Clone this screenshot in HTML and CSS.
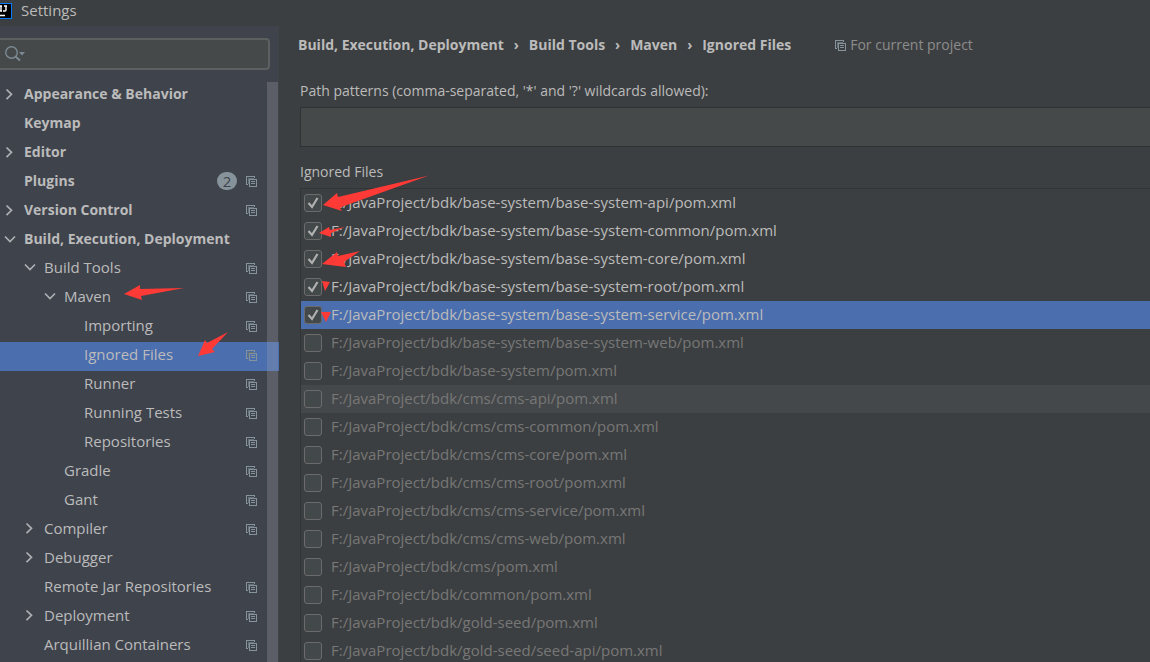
FILE: index.html
```html
<!DOCTYPE html>
<html lang="en">
<head>
<meta charset="utf-8">
<title>Settings</title>
<link rel="stylesheet" href="styles.css">
</head>
<body>
<svg class="symbols" aria-hidden="true">
  <symbol id="copy" viewBox="0 0 11 11">
    <path d="M0 0h9v2h-1v-1h-7v7h1v1h-2z" fill="#87939a"/>
    <path d="M2 2h6v1h-5v5h-1z" fill="#65717a"/>
    <path d="M3 3h8v8h-8zM4 4v6h6v-6z" fill="#87939a" fill-rule="evenodd"/>
    <path d="M5 5h4v1h-4zM5 7h4v1h-4z" fill="#87939a"/>
  </symbol>
  <symbol id="right" viewBox="0 0 12 12"><path d="M2.500 1.500L7.500 6.300l-5 4.800" fill="none" stroke="#adb0b2" stroke-width="1.700"/></symbol>
  <symbol id="down" viewBox="0 0 12 12"><path d="M1 3.500L6 8.500l5-5" fill="none" stroke="#adb0b2" stroke-width="1.700"/></symbol>
</svg>
<div class="window">
  <header class="titlebar">
    <svg class="logo" viewBox="0 0 12 16" aria-hidden="true"><path d="M0 0h12v16H0z" fill="#087cfa"/><path d="M0 1h11v14H0z" fill="#000"/><path d="M0 3h2M1 3v5M0 8h2M4 3h3M6 3v4q0 1-1 1H3M0 12.500h5" fill="none" stroke="#fff" stroke-width="1.400"/></svg>
    <span>Settings</span>
  </header>
  <div class="columns">
    <aside class="sidebar">
      <label class="search">
        <svg viewBox="0 0 22 18" aria-hidden="true"><circle cx="7.500" cy="7.500" r="5.800" fill="none" stroke="#7b8a94" stroke-width="1.400"/><path d="M11.500 11.500l4.500 4" stroke="#7b8a94" stroke-width="2"/><path d="M15 7h6l-3 3.500z" fill="#7b8a94"/></svg>
        <input type="text" aria-label="Search settings">
      </label>
      <div class="tree-area">
        <ul class="tree">
          <li class="strong"><svg class="arrow"><use href="#right"/></svg><span>Appearance &amp; Behavior</span></li>
          <li class="strong"><i class="arrow"></i><span>Keymap</span></li>
          <li class="strong"><svg class="arrow"><use href="#right"/></svg><span>Editor</span></li>
          <li class="strong"><i class="arrow"></i><span>Plugins</span><b class="badge">2</b><svg class="copy"><use href="#copy"/></svg></li>
          <li class="strong"><svg class="arrow"><use href="#right"/></svg><span>Version Control</span><svg class="copy"><use href="#copy"/></svg></li>
          <li class="strong"><svg class="arrow"><use href="#down"/></svg><span>Build, Execution, Deployment</span></li>
          <li class="level1"><svg class="arrow"><use href="#down"/></svg><span>Build Tools</span><svg class="copy"><use href="#copy"/></svg></li>
          <li class="level2"><svg class="arrow"><use href="#down"/></svg><span>Maven</span><svg class="copy"><use href="#copy"/></svg></li>
          <li class="level3"><i class="arrow"></i><span>Importing</span><svg class="copy"><use href="#copy"/></svg></li>
          <li class="level3 selected"><i class="arrow"></i><span>Ignored Files</span><svg class="copy"><use href="#copy"/></svg></li>
          <li class="level3"><i class="arrow"></i><span>Runner</span><svg class="copy"><use href="#copy"/></svg></li>
          <li class="level3"><i class="arrow"></i><span>Running Tests</span><svg class="copy"><use href="#copy"/></svg></li>
          <li class="level3"><i class="arrow"></i><span>Repositories</span><svg class="copy"><use href="#copy"/></svg></li>
          <li class="level2"><i class="arrow"></i><span>Gradle</span><svg class="copy"><use href="#copy"/></svg></li>
          <li class="level2"><i class="arrow"></i><span>Gant</span><svg class="copy"><use href="#copy"/></svg></li>
          <li class="level1"><svg class="arrow"><use href="#right"/></svg><span>Compiler</span><svg class="copy"><use href="#copy"/></svg></li>
          <li class="level1"><svg class="arrow"><use href="#right"/></svg><span>Debugger</span></li>
          <li class="level1"><i class="arrow"></i><span>Remote Jar Repositories</span><svg class="copy"><use href="#copy"/></svg></li>
          <li class="level1"><svg class="arrow"><use href="#right"/></svg><span>Deployment</span><svg class="copy"><use href="#copy"/></svg></li>
          <li class="level1"><i class="arrow"></i><span>Arquillian Containers</span><svg class="copy"><use href="#copy"/></svg></li>
        </ul>
        <div class="scrollbar"></div>
      </div>
    </aside>
    <main class="content">
      <nav class="crumbs">
        <span>Build, Execution, Deployment</span><i>›</i><span>Build Tools</span><i>›</i><span>Maven</span><i>›</i><span>Ignored Files</span>
        <small><svg class="copy"><use href="#copy"/></svg>For current project</small>
      </nav>
      <label class="caption" for="patterns">Path patterns (comma-separated, '*' and '?' wildcards allowed):</label>
      <input class="patterns" id="patterns" type="text">
      <h2 class="caption">Ignored Files</h2>
      <div class="files">
        <label><input type="checkbox" checked><span>F:/JavaProject/bdk/base-system/base-system-api/pom.xml</span></label>
        <label><input type="checkbox" checked><span>F:/JavaProject/bdk/base-system/base-system-common/pom.xml</span></label>
        <label><input type="checkbox" checked><span>F:/JavaProject/bdk/base-system/base-system-core/pom.xml</span></label>
        <label><input type="checkbox" checked><span>F:/JavaProject/bdk/base-system/base-system-root/pom.xml</span></label>
        <label class="selected"><input type="checkbox" checked><span>F:/JavaProject/bdk/base-system/base-system-service/pom.xml</span></label>
        <label class="off"><input type="checkbox"><span>F:/JavaProject/bdk/base-system/base-system-web/pom.xml</span></label>
        <label class="off"><input type="checkbox"><span>F:/JavaProject/bdk/base-system/pom.xml</span></label>
        <label class="off hovered"><input type="checkbox"><span>F:/JavaProject/bdk/cms/cms-api/pom.xml</span></label>
        <label class="off"><input type="checkbox"><span>F:/JavaProject/bdk/cms/cms-common/pom.xml</span></label>
        <label class="off"><input type="checkbox"><span>F:/JavaProject/bdk/cms/cms-core/pom.xml</span></label>
        <label class="off"><input type="checkbox"><span>F:/JavaProject/bdk/cms/cms-root/pom.xml</span></label>
        <label class="off"><input type="checkbox"><span>F:/JavaProject/bdk/cms/cms-service/pom.xml</span></label>
        <label class="off"><input type="checkbox"><span>F:/JavaProject/bdk/cms/cms-web/pom.xml</span></label>
        <label class="off"><input type="checkbox"><span>F:/JavaProject/bdk/cms/pom.xml</span></label>
        <label class="off"><input type="checkbox"><span>F:/JavaProject/bdk/common/pom.xml</span></label>
        <label class="off"><input type="checkbox"><span>F:/JavaProject/bdk/gold-seed/pom.xml</span></label>
        <label class="off"><input type="checkbox"><span>F:/JavaProject/bdk/gold-seed/seed-api/pom.xml</span></label>
      </div>
    </main>
  </div>
  <svg class="marks" width="440" height="370" viewBox="0 0 440 370" aria-hidden="true">
    <g fill="#fe3a36">
      <path d="M323 205L337 193L338 197L429 175.500L344 206L340 208L342 211z"/>
      <path d="M319 233L329 227L330 230L345 227L331 233L331 237z"/>
      <path d="M322 264L337 252L338 256L360 251L344 262L346 267z"/>
      <path d="M322 281L330 282L325 291z"/>
      <path d="M321 312H331L326 322z"/>
      <path d="M124 294L140 285L140 289L184 288L141 296L142 300z"/>
      <path d="M198 356L205 340L207 343L228 332L212 349L215 352z"/>
    </g>
  </svg>
</div>
</body>
</html>
```
FILE: styles.css
```css
* { box-sizing: border-box; }
body {
  margin: 0;
  background: #3c3f41;
  color: #bbbbbb;
  font: 15px/20px "Open Sans", "Noto Sans", sans-serif;
}
.symbols { display: none; }
.window {
  position: relative;
  display: flex;
  flex-direction: column;
  height: 100vh;
  overflow: hidden;
}
.titlebar {
  display: flex;
  align-items: center;
  gap: 9px;
  height: 26px;
  flex: none;
  padding-bottom: 6px;
}
.logo { width: 12px; height: 16px; margin-top: 2px; }
.columns { display: flex; flex: 1; min-height: 0; }
.sidebar {
  display: flex;
  flex-direction: column;
  width: 279px;
  flex: none;
  background: #3f434c;
  padding-top: 12px;
}
.search {
  display: flex;
  align-items: center;
  height: 32px;
  flex: none;
  margin-right: 9px;
  padding-left: 4px;
  background: #45494a;
  border: 2px solid #5d6061;
  border-left: 0;
  border-radius: 0 4px 4px 0;
}
.search svg { width: 22px; height: 18px; flex: none; }
.search input {
  flex: 1;
  min-width: 0;
  background: none;
  border: 0;
  outline: 0;
  color: inherit;
  font: inherit;
}
.tree-area { position: relative; margin-top: 11px; flex: 1; min-height: 0; }
.tree { list-style: none; margin: 0; padding: 0; }
.tree li {
  display: flex;
  align-items: center;
  height: 29px;
  padding: 0 22px 5px 4px;
  white-space: nowrap;
}
.tree .arrow { width: 12px; height: 12px; flex: none; margin-right: 8px; }
.tree .level1 { padding-left: 24px; }
.tree .level2 { padding-left: 44px; }
.tree .level3 { padding-left: 64px; }
.tree span { flex: 1; }
.tree .strong { padding-bottom: 3px; font-weight: 700; font-size: 14px; }
.tree .copy { margin-top: 3px; }
.tree .strong .copy { margin-top: 1px; }
.copy { width: 11px; height: 11px; flex: none; }
.badge {
  width: 20px;
  height: 18px;
  margin-right: 9px;
  border-radius: 9px;
  background: #87939a;
  color: #3f434c;
  font-size: 15px;
  font-weight: 400;
  line-height: 18px;
  text-align: center;
}
.selected { background: #4b6eaf; }
.scrollbar {
  position: absolute;
  top: 1px;
  right: 1px;
  bottom: 0;
  width: 11px;
  background: rgba(166, 166, 176, 0.28);
}
.content {
  display: flex;
  flex-direction: column;
  flex: 1;
  min-width: 0;
  padding: 9px 0 0 21px;
}
.crumbs {
  display: flex;
  align-items: center;
  margin-left: -2px;
  font-size: 14px;
  font-weight: 700;
  white-space: nowrap;
}
.crumbs i { width: 25px; text-align: center; font-style: normal; }
.crumbs small {
  display: flex;
  align-items: center;
  gap: 4px;
  margin-left: 44px;
  color: #8c8c8c;
  font-size: 14px;
  font-weight: 400;
}
.caption { margin: 25px 0 0; font-size: 14px; font-weight: 400; white-space: nowrap; }
.patterns {
  height: 40px;
  flex: none;
  margin-top: 7px;
  background: #45494a;
  border: 1px solid #2f3133;
  border-right: 0;
  outline: 0;
  color: inherit;
  font: inherit;
}
label.caption { margin-top: 26px; }
.caption + .patterns { margin-top: 6px; }
h2.caption { margin-top: 15px; }
.files {
  flex: 1;
  min-height: 0;
  overflow: hidden;
  margin-top: 6px;
  border: 1px solid #323436;
  border-width: 1px 0 0 1px;
}
.files label {
  display: flex;
  align-items: center;
  gap: 9px;
  height: 28px;
  padding-left: 3px;
  white-space: nowrap;
}
.files input {
  appearance: none;
  width: 18px;
  height: 18px;
  margin: 0;
  border: 1px solid #6b6b6b;
  border-radius: 3px;
  background: #43494a;
}
.files input:checked {
  background: #43494a url("data:image/svg+xml,%3Csvg xmlns='http://www.w3.org/2000/svg' viewBox='0 0 16 16'%3E%3Cpath d='M3.500 8l3.500 4 5.500-9' fill='none' stroke='%23b0b0b0' stroke-width='2.200'/%3E%3C/svg%3E") center / 16px 16px;
}
.files span { padding-bottom: 3px; }
.off { color: #777777; }
.hovered { background: #45484a; }
.marks { position: absolute; top: 0; left: 0; pointer-events: none; }
```
